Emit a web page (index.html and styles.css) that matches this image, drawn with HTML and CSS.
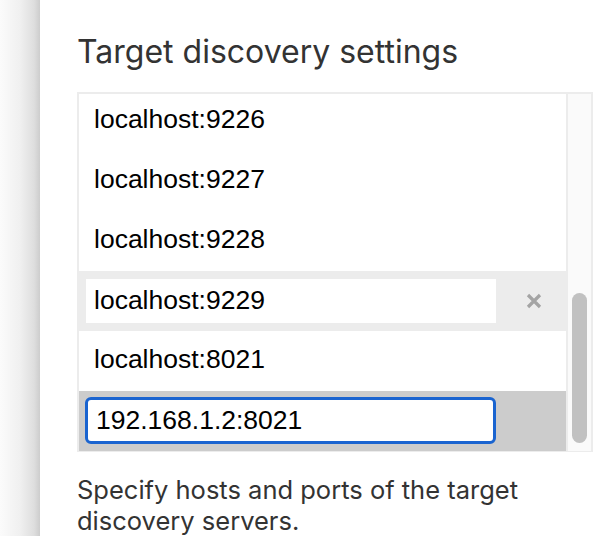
FILE: index.html
```html
<!DOCTYPE html>
<html>
<head>
<meta charset="utf-8">
<link rel="stylesheet" href="styles.css">
</head>
<body>
<div class="page">
  <div class="shade"></div>
  <div class="panel">
    <h1 class="title">Target discovery settings</h1>
    <div class="listbox">
      <div class="list">
        <div class="rows">
          <div class="row"><span class="label">localhost:9226</span></div>
          <div class="row"><span class="label">localhost:9227</span></div>
          <div class="row"><span class="label">localhost:9228</span></div>
          <div class="row hover">
            <div class="field">localhost:9229</div>
            <span class="remove">
              <svg width="16" height="16" viewBox="0 0 16 16"><path d="M2 2 L14 14 M14 2 L2 14" stroke="#a4a4a4" stroke-width="3.2" stroke-linecap="butt"/></svg>
            </span>
          </div>
          <div class="row"><span class="label">localhost:8021</span></div>
          <div class="row selected">
            <div class="field editing">192.168.1.2:8021</div>
          </div>
        </div>
      </div>
      <div class="track"><div class="thumb"></div></div>
    </div>
    <p class="hint">Specify hosts and ports of the target discovery servers.</p>
  </div>
</div>
</body>
</html>
```
FILE: styles.css
```css
html, body {
  margin: 0;
  padding: 0;
  background: #fff;
}
.page {
  display: flex;
  width: 594px;
  height: 536px;
  overflow: hidden;
}
.shade {
  width: 40px;
  flex: none;
  background: linear-gradient(to right, #fbfbfb 0%, #f0f0f0 50%, #dedede 85%, #cdcdcd 100%);
}
.panel {
  flex: 1;
  display: flex;
  flex-direction: column;
  padding: 30px 1px 0 37px;
  background: #fff;
}
.title {
  margin: 0;
  font-family: Inter, "Noto Sans", sans-serif;
  font-weight: 400;
  font-size: 32px;
  line-height: 44px;
  color: #333;
}
.listbox {
  margin-top: 18px;
  display: flex;
  height: 358px;
  border: 2px solid #ececec;
  border-bottom-width: 1px;
}
.list {
  flex: 1;
  overflow: hidden;
  background: #fff;
}
.rows {
  margin-top: -3px;
  display: flex;
  flex-direction: column;
}
.row {
  height: 60px;
  box-sizing: border-box;
  display: flex;
  align-items: center;
  padding-left: 15px;
  padding-bottom: 3px;
  font-family: "Liberation Sans", Arial, sans-serif;
  font-size: 26.5px;
  color: #000;
}
.row.hover {
  background: #ececec;
  padding-left: 7px;
  padding-bottom: 1px;
}
.row.selected {
  background: #cccccc;
  padding-left: 6px;
  padding-bottom: 1px;
}
.field {
  width: 410px;
  height: 44px;
  box-sizing: border-box;
  background: #fff;
  padding-left: 8px;
  padding-bottom: 1px;
  display: flex;
  align-items: center;
}
.field.editing {
  width: 411px;
  height: 47px;
  border: 3px solid #1a64d0;
  border-radius: 6px;
  padding-left: 8px;
  font-size: 26.5px;
}
.remove {
  margin-left: 30px;
  display: flex;
}
.track {
  width: 25px;
  flex: none;
  background: #fafafa;
  border-left: 2px solid #ececec;
  display: flex;
  flex-direction: column;
  padding-top: 199px;
  align-items: center;
  box-sizing: border-box;
}
.thumb {
  width: 15px;
  height: 150px;
  background: #c1c1c1;
  border-radius: 8px;
}
.hint {
  margin: 22px 0 0 0;
  font-family: Inter, "Noto Sans", sans-serif;
  font-size: 25.5px;
  line-height: 31px;
  color: #333;
  width: 500px;
}
```
